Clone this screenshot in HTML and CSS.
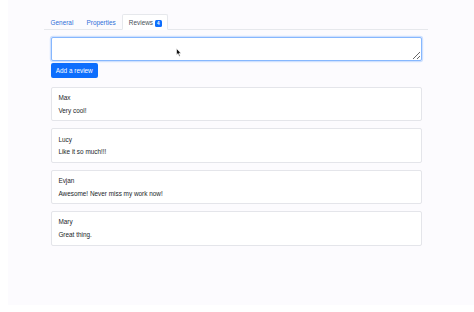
FILE: index.html
```html
<!DOCTYPE html>
<html lang="en">
<head>
    <meta charset="UTF-8">
    <meta name="viewport" content="width=device-width, initial-scale=1.0">
    <title>Reviews</title>
    <link rel="stylesheet" href="styles.css">
</head>
<body>
    <div class="page">
        <ul class="tabs">
            <li><a class="tab-link" href="#">General</a></li>
            <li><a class="tab-link" href="#">Properties</a></li>
            <li><a class="tab-link active" href="#">Reviews <span class="badge">4</span></a></li>
        </ul>

        <div class="tab-content">
            <div class="review-form">
                <textarea class="review-input"></textarea>
                <svg class="cursor" width="6" height="9" viewBox="0 0 6 9">
                    <path d="M0.5 0.5 L0.5 7 L2 5.6 L3.2 8.3 L4.2 7.9 L3 5.2 L5 5.2 Z" fill="#111" stroke="#fff" stroke-width="0.6"/>
                </svg>
                <button class="btn-add">Add a review</button>
            </div>

            <div class="review-card">
                <div class="review-name">Max</div>
                <div class="review-text">Very cool!</div>
            </div>
            <div class="review-card">
                <div class="review-name">Lucy</div>
                <div class="review-text">Like it so much!!!</div>
            </div>
            <div class="review-card">
                <div class="review-name">Evjan</div>
                <div class="review-text">Awesome! Never miss my work now!</div>
            </div>
            <div class="review-card">
                <div class="review-name">Mary</div>
                <div class="review-text">Great thing.</div>
            </div>
        </div>
    </div>
</body>
</html>
```

FILE: styles.css
```css
html {
    background-color: #fff;
}

body {
    font-family: "Liberation Sans", Arial, sans-serif;
    font-size: 6.4px;
    line-height: 1.5;
    color: #212529;
    margin: 0 0 7px 8px;
    padding: 0;
    height: 305px;
    background-color: #fcfbfe;
}

.page {
    width: 384px;
    padding: 14px 0 0 36px;
}

.tabs {
    list-style: none;
    margin: 0;
    padding: 0;
    display: flex;
    border-bottom: 1px solid #e6e8ec;
}

.tab-link {
    display: block;
    height: 16px;
    box-sizing: border-box;
    padding: 3px 5.6px;
    color: #2f6fd8;
    text-decoration: none;
    border: 1px solid transparent;
    border-radius: 2px 2px 0 0;
    margin-bottom: -1px;
}

.tab-link.active {
    color: #495057;
    background-color: #fff;
    border-color: #e6e8ec #e6e8ec #fff;
}

.badge {
    display: inline-block;
    background-color: #0d6efd;
    color: #fff;
    font-size: 4.6px;
    font-weight: bold;
    line-height: 1;
    padding: 1.4px 2.2px;
    border-radius: 1.5px;
    vertical-align: 0.5px;
}

.tab-content {
    padding: 7px 6.4px 0 7px;
}

.review-form {
    position: relative;
    margin-bottom: 9.2px;
}

.review-input {
    display: block;
    box-sizing: border-box;
    width: 100%;
    height: 24.4px;
    margin: 0;
    padding: 2.4px 4.8px;
    font: inherit;
    background-color: #fff;
    border: 1px solid #86b7fe;
    border-radius: 2px;
    box-shadow: 0 0 0 1.2px rgba(13, 110, 253, 0.18);
    outline: none;
    resize: vertical;
}

.cursor {
    position: absolute;
    left: 125px;
    top: 11px;
}

.btn-add {
    display: block;
    margin-top: 2px;
    height: 14.5px;
    padding: 0 4.8px;
    font: inherit;
    color: #fff;
    background-color: #0d6efd;
    border: none;
    border-radius: 2px;
    cursor: pointer;
}

.review-card {
    background-color: #fff;
    border: 1px solid #e4e5ea;
    border-radius: 2px;
    padding: 5.2px 6.4px 5px;
    margin-bottom: 7px;
}

.review-text {
    margin-top: 3px;
}
```
